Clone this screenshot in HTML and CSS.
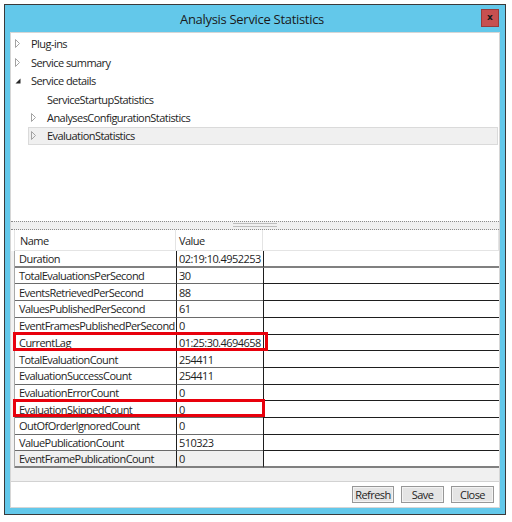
FILE: index.html
```html
<!DOCTYPE html>
<html>
<head>
<meta charset="utf-8">
<title>Analysis Service Statistics</title>
<link rel="stylesheet" href="styles.css">
</head>
<body>
<div class="window">
  <div class="titlebar">
    <span></span>
    <span class="title">Analysis Service Statistics</span>
    <button class="close">x</button>
  </div>
  <div class="client">
    <div class="tree">
      <div class="node"><span class="exp"><svg class="tri" width="6" height="9" viewBox="0 0 6 9"><path d="M0.5 0.5 L4.5 4.5 L0.5 8.5 Z" fill="none" stroke="#a3a3a3"/></svg></span><span>Plug-ins</span></div>
      <div class="node"><span class="exp"><svg class="tri" width="6" height="9" viewBox="0 0 6 9"><path d="M0.5 0.5 L4.5 4.5 L0.5 8.5 Z" fill="none" stroke="#a3a3a3"/></svg></span><span>Service summary</span></div>
      <div class="node"><span class="exp"><svg class="tri" width="6" height="6" viewBox="0 0 6 6"><path d="M5.5 0.5 V5.5 H0.5 Z" fill="#262626"/></svg></span><span>Service details</span></div>
      <div class="node l1"><span class="exp"></span><span>ServiceStartupStatistics</span></div>
      <div class="node l1"><span class="exp"><svg class="tri" width="6" height="9" viewBox="0 0 6 9"><path d="M0.5 0.5 L4.5 4.5 L0.5 8.5 Z" fill="none" stroke="#a3a3a3"/></svg></span><span>AnalysesConfigurationStatistics</span></div>
      <div class="node l1 sel"><span class="exp"><svg class="tri" width="6" height="9" viewBox="0 0 6 9"><path d="M0.5 0.5 L4.5 4.5 L0.5 8.5 Z" fill="none" stroke="#a3a3a3"/></svg></span><span>EvaluationStatistics</span></div>
    </div>
    <div class="splitter"><div class="grip"></div></div>
    <div class="grid">
      <div class="grow head"><div class="rh"></div><div class="c name">Name</div><div class="c value">Value</div><div class="c fill"></div></div>
      <div class="grow thick"><div class="rh"></div><div class="c name">Duration</div><div class="c value">02:19:10.4952253</div><div class="c fill"></div></div>
      <div class="grow"><div class="rh"></div><div class="c name">TotalEvaluationsPerSecond</div><div class="c value">30</div><div class="c fill"></div></div>
      <div class="grow"><div class="rh"></div><div class="c name">EventsRetrievedPerSecond</div><div class="c value">88</div><div class="c fill"></div></div>
      <div class="grow"><div class="rh"></div><div class="c name">ValuesPublishedPerSecond</div><div class="c value">61</div><div class="c fill"></div></div>
      <div class="grow"><div class="rh"></div><div class="c name">EventFramesPublishedPerSecond</div><div class="c value">0</div><div class="c fill"></div></div>
      <div class="grow"><div class="rh"></div><div class="c name">CurrentLag</div><div class="c value">01:25:30.4694658</div><div class="c fill"></div></div>
      <div class="grow"><div class="rh"></div><div class="c name">TotalEvaluationCount</div><div class="c value">254411</div><div class="c fill"></div></div>
      <div class="grow"><div class="rh"></div><div class="c name">EvaluationSuccessCount</div><div class="c value">254411</div><div class="c fill"></div></div>
      <div class="grow"><div class="rh"></div><div class="c name">EvaluationErrorCount</div><div class="c value">0</div><div class="c fill"></div></div>
      <div class="grow"><div class="rh"></div><div class="c name">EvaluationSkippedCount</div><div class="c value">0</div><div class="c fill"></div></div>
      <div class="grow"><div class="rh"></div><div class="c name">OutOfOrderIgnoredCount</div><div class="c value">0</div><div class="c fill"></div></div>
      <div class="grow"><div class="rh"></div><div class="c name">ValuePublicationCount</div><div class="c value">510323</div><div class="c fill"></div></div>
      <div class="grow thick last"><div class="rh"></div><div class="c name">EventFramePublicationCount</div><div class="c value">0</div><div class="c fill"></div></div>
      <div class="hband"></div>
    </div>
    <div class="actions">
      <button class="btn b-refresh">Refresh</button>
      <button class="btn b-save">Save</button>
      <button class="btn b-close">Close</button>
    </div>
  </div>
  <div class="mark m1"></div>
  <div class="mark m2"></div>
</div>
</body>
</html>
```
FILE: styles.css
```css
* { box-sizing: border-box; }
html, body { margin: 0; padding: 0; background: #ffffff; }
body { font-family: "Open Sans", "Noto Sans", sans-serif; }

.window {
  position: relative;
  margin: 4px 0 0 4px;
  width: 502px;
  height: 511px;
  border: 1px solid #3a3a3a;
  background: #63c8ea;
  padding: 0 5px 6px 5px;
  display: flex;
  flex-direction: column;
}

.titlebar {
  height: 27px;
  margin: 0 -5px;
  padding-right: 6px;
  display: grid;
  grid-template-columns: 1fr auto 1fr;
  align-items: center;
}
.title {
  font-size: 13px;
  letter-spacing: -0.3px;
  color: #1a1a1a;
}
.close {
  justify-self: end;
  align-self: start;
  margin-top: 4px;
  width: 18px;
  height: 18px;
  padding: 0 0 2px 0;
  background: #c75050;
  border: 1px solid #973b3b;
  color: #1a1a1a;
  font-family: "DejaVu Sans", sans-serif;
  font-weight: bold;
  font-size: 9px;
  line-height: 1;
}

.client {
  flex: 1;
  background: #ffffff;
  border: 1px solid #d6d6d6;
  display: flex;
  flex-direction: column;
  font-size: 11px;
  letter-spacing: -0.55px;
  color: #1e1e1e;
}

.tree {
  flex: 1;
  padding: 1.8px 1px 0 1px;
}
.node {
  display: flex;
  align-items: center;
  height: 18.4px;
  border: 1px solid transparent;
  white-space: nowrap;
}
.node.l1 { margin-left: 16px; }
.node.sel { background: #f0f0f0; border-color: #dadada; }
.exp {
  width: 18px;
  height: 100%;
  display: flex;
  align-items: center;
  padding-left: 2px;
  flex: none;
}
.tri { display: block; }

.splitter {
  height: 9px;
  flex: none;
  background: #f0f0f0;
  border-top: 1px dotted #8a8a8a;
  border-bottom: 1px dotted #8a8a8a;
  display: flex;
  justify-content: center;
}
.grip {
  width: 44px;
  height: 4px;
  margin-top: 1px;
  border-top: 1px solid #bdbdbd;
  border-bottom: 1px solid #bdbdbd;
}

.grid {
  flex: none;
  display: flex;
  flex-direction: column;
}
.grow {
  display: grid;
  grid-template-columns: 4px 161px 87px 1fr;
  height: 16.7px;
}
.grow .c {
  display: flex;
  align-items: center;
  white-space: nowrap;
  overflow: hidden;
  border-bottom: 1px solid #6a6a6a;
}
.grow .rh {
  background: #f2f2f2;
  border-right: 1px solid #a8a8a8;
}
.grow .name { padding-left: 4px; }
.grow .value { border-left: 1px solid #1e1e1e; padding-left: 2px; }
.grow .fill { border-left: 1px solid #1e1e1e; border-bottom-color: #1e1e1e; }

.grow.head { height: 21px; }
.grow.head .c {
  border-left: none;
  border-right: 1px solid #e4e4e4;
  border-bottom: 1px solid #e4e4e4;
}
.grow.head .name { padding-left: 5px; }
.grow.head .value { padding-left: 3px; }
.grow.head .rh { background: #ffffff; border-right-color: #e4e4e4; }

.grow.thick .c { border-bottom: 2px solid #808080; }
.grow.last .name, .grow.last .value { background: #f0f0f0; }

.hband {
  height: 14px;
  background: #f0f0f0;
  border-bottom: 1px solid #d2d2d2;
}

.actions {
  flex: none;
  height: 25px;
  display: flex;
  justify-content: flex-end;
  align-items: center;
  gap: 7px;
  padding-right: 5px;
}
.btn {
  height: 17px;
  padding: 0;
  background: #e4e4e4;
  border: 1px solid #979797;
  box-shadow: inset 0 0 0 1px #f3f3f3;
  font: inherit;
  letter-spacing: inherit;
  color: #1e1e1e;
  line-height: 1;
}
.b-refresh { width: 42px; }
.b-save { width: 43px; }
.b-close { width: 43px; }

.mark {
  position: absolute;
  border: 3px solid #e8000c;
}
.m1 { left: 8px; top: 327px; width: 255px; height: 19px; }
.m2 { left: 8px; top: 394px; width: 252px; height: 18px; }
```
